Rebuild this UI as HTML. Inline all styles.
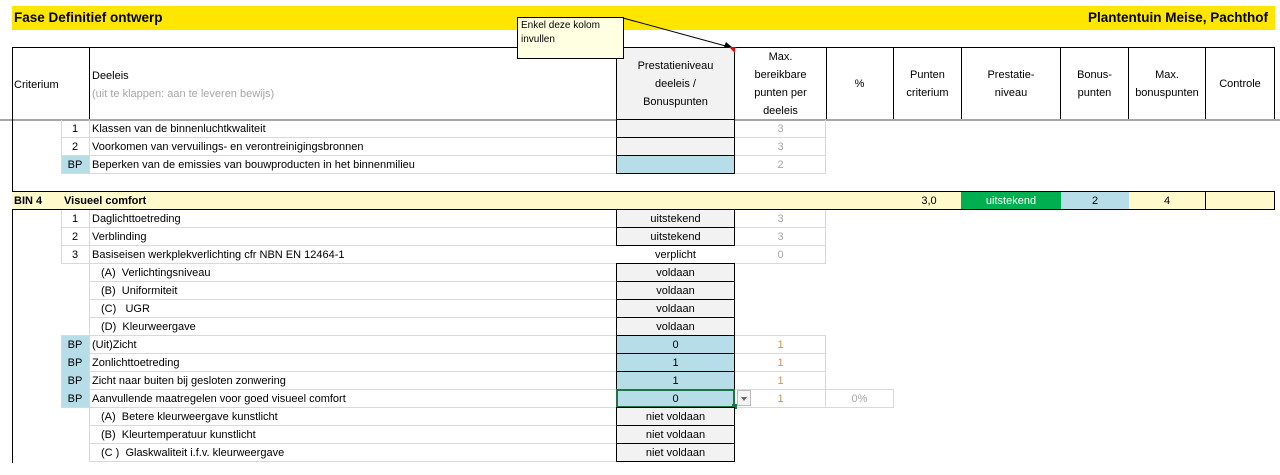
<!DOCTYPE html>
<html><head><meta charset="utf-8">
<style>
*{margin:0;padding:0;box-sizing:border-box}
body{width:1280px;height:475px;background:#fff;position:relative;overflow:hidden;font-family:"Liberation Sans",sans-serif;font-size:11px;color:#000}
div{position:absolute}
.t{white-space:nowrap;line-height:18px;height:18px;padding-top:1px}
.c{text-align:center}
.hl{height:1px;background:#d9d9d9}
.vl{width:1px;background:#d9d9d9}
.bk{background:#000}
.in{left:616px;width:119px;height:19px;border:1px solid #000;background:#f2f2f2;text-align:center;line-height:18px}
.blue{background:#b7dee8}
.mx{left:735px;width:91px;text-align:center;color:#a6a6a6}
.or{color:#c4975a}
.hd{text-align:center;line-height:18px;display:flex;align-items:center;justify-content:center;top:48px;height:72px}
</style></head><body>
<div style="left:12px;top:6px;width:1263px;height:24px;background:#ffe600"></div>
<div class="t" style="left:14px;top:8px;font-weight:bold;font-size:13.5px">Fase Definitief ontwerp</div>
<div class="t" style="right:12px;top:8px;font-weight:bold;font-size:13.5px">Plantentuin Meise, Pachthof</div>

<div class="bk" style="left:12px;top:47px;width:1263px;height:1px"></div>
<div style="left:0;top:119px;width:1280px;height:2px;background:#a6a6a6"></div>
<div style="left:616px;top:48px;width:119px;height:71px;background:#f2f2f2"></div>
<div class="bk" style="left:12px;top:47px;width:1px;height:416px"></div>
<div class="bk" style="left:89px;top:47px;width:1px;height:72px"></div>
<div class="bk" style="left:616px;top:47px;width:1px;height:72px"></div>
<div class="bk" style="left:734px;top:47px;width:1px;height:72px"></div>
<div class="bk" style="left:826px;top:47px;width:1px;height:72px"></div>
<div class="bk" style="left:893px;top:47px;width:1px;height:72px"></div>
<div class="bk" style="left:961px;top:47px;width:1px;height:72px"></div>
<div class="bk" style="left:1060px;top:47px;width:1px;height:72px"></div>
<div class="bk" style="left:1128px;top:47px;width:1px;height:72px"></div>
<div class="bk" style="left:1205px;top:47px;width:1px;height:72px"></div>
<div class="bk" style="left:1274px;top:47px;width:1px;height:72px"></div>
<div class="t" style="left:14px;top:75px">Criterium</div>
<div class="t" style="left:92px;top:66px">Deeleis</div>
<div class="t" style="left:92px;top:84px;color:#a6a6a6">(uit te klappen: aan te leveren bewijs)</div>
<div class="hd" style="left:616px;width:119px">Prestatieniveau<br>deeleis /<br>Bonuspunten</div>
<div class="hd" style="left:735px;width:91px">Max.<br>bereikbare<br>punten per<br>deeleis</div>
<div class="hd" style="left:826px;width:67px">%</div>
<div class="hd" style="left:894px;width:67px">Punten<br>criterium</div>
<div class="hd" style="left:962px;width:98px">Prestatie-<br>niveau</div>
<div class="hd" style="left:1061px;width:67px">Bonus-<br>punten</div>
<div class="hd" style="left:1129px;width:76px">Max.<br>bonuspunten</div>
<div class="hd" style="left:1206px;width:68px">Controle</div>

<svg style="position:absolute;left:0;top:0" width="1280" height="475">
<line x1="623" y1="18" x2="733" y2="48" stroke="#000" stroke-width="1"/>
<polygon points="733,48 726,42 724,47" fill="#000"/>
<polygon points="729,47 735,47 735,53" fill="#e00"/>
</svg>
<div style="left:517px;top:17px;width:107px;height:42px;background:#ffffe1;border:1px solid #000;font-size:10px;line-height:14px;padding:1px 3px">Enkel deze kolom<br>invullen</div>

<div class="vl" style="left:61px;top:120px;height:53px"></div>
<div class="vl" style="left:89px;top:120px;height:53px"></div>
<div class="vl" style="left:825px;top:120px;height:53px"></div>
<div class="hl" style="left:61px;top:137px;width:765px"></div>
<div class="hl" style="left:61px;top:155px;width:765px"></div>
<div class="hl" style="left:61px;top:173px;width:765px"></div>
<div class="blue" style="left:62px;top:156px;width:27px;height:17px"></div>
<div class="t c" style="left:61px;width:28px;top:119px">1</div>
<div class="t c" style="left:61px;width:28px;top:137px">2</div>
<div class="t c" style="left:61px;width:28px;top:155px">BP</div>
<div class="t" style="left:92px;top:119px">Klassen van de binnenluchtkwaliteit</div>
<div class="t" style="left:92px;top:137px">Voorkomen van vervuilings- en verontreinigingsbronnen</div>
<div class="t" style="left:92px;top:155px">Beperken van de emissies van bouwproducten in het binnenmilieu</div>
<div class="in" style="top:119px"></div>
<div class="in" style="top:137px"></div>
<div class="in blue" style="top:155px"></div>
<div class="t mx" style="top:119px">3</div>
<div class="t mx" style="top:137px">3</div>
<div class="t mx" style="top:155px">2</div>

<div style="left:12px;top:191px;width:1263px;height:19px;background:#fff9cc;border-top:1px solid #000;border-bottom:1px solid #000"></div>
<div style="left:961px;top:192px;width:100px;height:17px;background:#00b050"></div>
<div style="left:1061px;top:192px;width:68px;height:17px;background:#b7dee8"></div>
<div style="left:1205px;top:191px;width:70px;height:19px;border:1px solid #000;background:#fff9cc"></div>
<div class="t" style="left:14px;top:191px;font-weight:bold">BIN 4</div>
<div class="t" style="left:64px;top:191px;font-weight:bold">Visueel comfort</div>
<div class="t c" style="left:894px;width:70px;top:191px">3,0</div>
<div class="t c" style="left:961px;width:100px;top:191px;color:#fff">uitstekend</div>
<div class="t c" style="left:1061px;width:68px;top:191px">2</div>
<div class="t c" style="left:1129px;width:76px;top:191px">4</div>

<div class="vl" style="left:61px;top:210px;height:53px"></div>
<div class="vl" style="left:61px;top:335px;height:72px"></div>
<div class="vl" style="left:89px;top:210px;height:252px"></div>
<div class="vl" style="left:825px;top:210px;height:53px"></div>
<div class="vl" style="left:825px;top:335px;height:72px"></div>
<div class="vl" style="left:893px;top:389px;height:18px"></div>
<div class="hl" style="left:61px;top:227px;width:765px"></div>
<div class="hl" style="left:61px;top:245px;width:765px"></div>
<div class="hl" style="left:61px;top:263px;width:765px"></div>
<div class="hl" style="left:89px;top:281px;width:527px"></div>
<div class="hl" style="left:89px;top:299px;width:527px"></div>
<div class="hl" style="left:89px;top:317px;width:527px"></div>
<div class="hl" style="left:61px;top:335px;width:765px"></div>
<div class="hl" style="left:61px;top:353px;width:765px"></div>
<div class="hl" style="left:61px;top:371px;width:765px"></div>
<div class="hl" style="left:61px;top:389px;width:833px"></div>
<div class="hl" style="left:61px;top:407px;width:833px"></div>
<div class="hl" style="left:89px;top:425px;width:527px"></div>
<div class="hl" style="left:89px;top:443px;width:527px"></div>
<div class="hl" style="left:89px;top:461px;width:527px"></div>
<div class="blue" style="left:62px;top:336px;width:27px;height:71px"></div>

<div class="t c" style="left:61px;width:28px;top:209px">1</div>
<div class="t c" style="left:61px;width:28px;top:227px">2</div>
<div class="t c" style="left:61px;width:28px;top:245px">3</div>
<div class="t c" style="left:61px;width:28px;top:335px">BP</div>
<div class="t c" style="left:61px;width:28px;top:353px">BP</div>
<div class="t c" style="left:61px;width:28px;top:371px">BP</div>
<div class="t c" style="left:61px;width:28px;top:389px">BP</div>

<div class="t" style="left:92px;top:209px">Daglichttoetreding</div>
<div class="t" style="left:92px;top:227px">Verblinding</div>
<div class="t" style="left:92px;top:245px">Basiseisen werkplekverlichting cfr NBN EN 12464-1</div>
<div class="t" style="left:101px;top:263px">(A)&nbsp; Verlichtingsniveau</div>
<div class="t" style="left:101px;top:281px">(B)&nbsp; Uniformiteit</div>
<div class="t" style="left:101px;top:299px">(C)&nbsp;&nbsp; UGR</div>
<div class="t" style="left:101px;top:317px">(D)&nbsp; Kleurweergave</div>
<div class="t" style="left:92px;top:335px">(Uit)Zicht</div>
<div class="t" style="left:92px;top:353px">Zonlichttoetreding</div>
<div class="t" style="left:92px;top:371px">Zicht naar buiten bij gesloten zonwering</div>
<div class="t" style="left:92px;top:389px">Aanvullende maatregelen voor goed visueel comfort</div>
<div class="t" style="left:101px;top:407px">(A)&nbsp; Betere kleurweergave kunstlicht</div>
<div class="t" style="left:101px;top:425px">(B)&nbsp; Kleurtemperatuur kunstlicht</div>
<div class="t" style="left:101px;top:443px">(C )&nbsp; Glaskwaliteit i.f.v. kleurweergave</div>

<div class="in" style="top:209px">uitstekend</div>
<div class="in" style="top:227px">uitstekend</div>
<div class="t c" style="left:616px;width:119px;top:245px">verplicht</div>
<div class="in" style="top:263px">voldaan</div>
<div class="in" style="top:281px">voldaan</div>
<div class="in" style="top:299px">voldaan</div>
<div class="in" style="top:317px">voldaan</div>
<div class="in blue" style="top:335px">0</div>
<div class="in blue" style="top:353px">1</div>
<div class="in blue" style="top:371px">1</div>
<div class="in blue" style="top:389px;border:2px solid #217346;line-height:16px">0</div>
<div style="left:732px;top:404px;width:5px;height:5px;background:#217346"></div>
<div class="in" style="top:407px">niet voldaan</div>
<div class="in" style="top:425px">niet voldaan</div>
<div class="in" style="top:443px">niet voldaan</div>
<div style="left:737px;top:390px;width:14px;height:16px;border:1px solid #bbb;background:#f4f4f4"></div>
<div style="left:741px;top:397px;width:0;height:0;border-left:3px solid transparent;border-right:3px solid transparent;border-top:4px solid #666"></div>

<div class="t mx" style="top:209px">3</div>
<div class="t mx" style="top:227px">3</div>
<div class="t mx" style="top:245px">0</div>
<div class="t mx or" style="top:335px">1</div>
<div class="t mx or" style="top:353px">1</div>
<div class="t mx or" style="top:371px">1</div>
<div class="t mx or" style="top:389px">1</div>
<div class="t c" style="left:826px;width:67px;top:389px;color:#a6a6a6">0%</div>
</body></html>
